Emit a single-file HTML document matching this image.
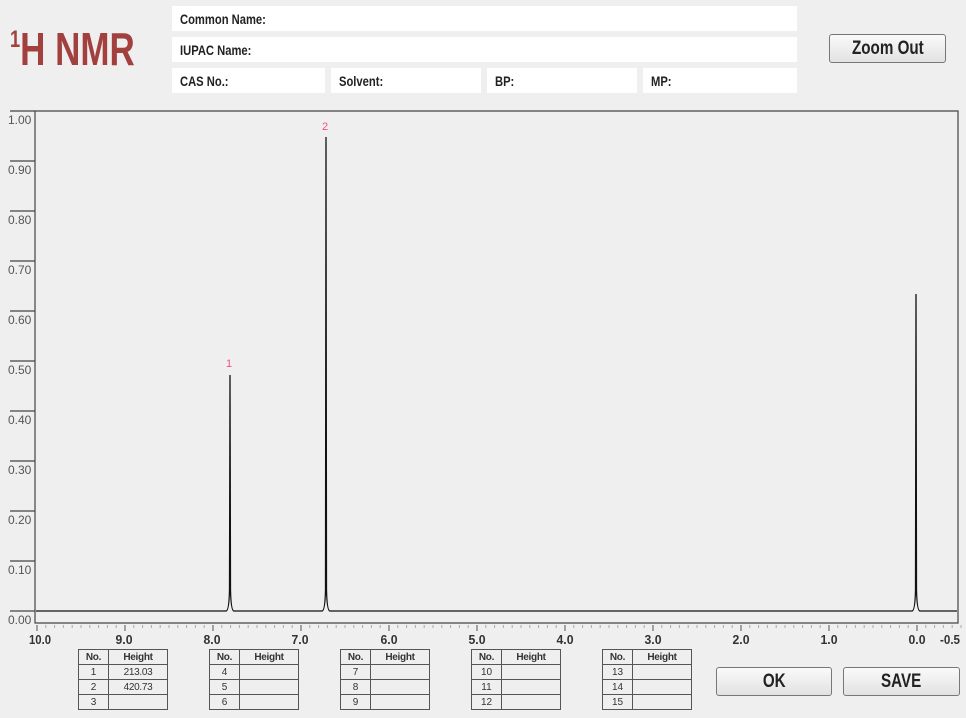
<!DOCTYPE html><html><head><style>
body{margin:0;width:966px;height:718px;background:#efefef;font-family:"Liberation Sans",sans-serif;overflow:hidden;position:relative}
.f{position:absolute;background:#fff;height:25px;font-weight:bold;font-size:14px;line-height:26px;padding-left:8px;box-sizing:border-box;color:#222}
.f span{display:inline-block;transform:scaleX(0.8);transform-origin:left}
.btn{position:absolute;border:1px solid #777;border-radius:3px;background:linear-gradient(#fafafa,#e2e2e2);font-weight:bold;text-align:center;color:#222;box-sizing:border-box}
.btn span{display:inline-block;transform:scaleX(0.8)}
table{position:absolute;border-collapse:collapse;font-size:10px;color:#333}
td{border:1px solid #555;height:14px;padding:0;line-height:13px}
td.n{width:29px;text-align:center}td.h{width:58px;text-align:center}
td b,td.h{letter-spacing:-0.3px}
</style></head><body>
<div style="position:absolute;left:10px;top:22px;color:#a2403f;font-weight:bold;font-size:46px;transform:scaleX(0.76);transform-origin:left;white-space:nowrap"><span style="font-size:24px;position:relative;top:-18px">1</span>H NMR</div>
<div class="f" style="left:172px;top:6px;width:625px"><span>Common Name:</span></div>
<div class="f" style="left:172px;top:37px;width:625px"><span>IUPAC Name:</span></div>
<div class="f" style="left:172px;top:68px;width:153px"><span>CAS No.:</span></div>
<div class="f" style="left:331px;top:68px;width:150px"><span>Solvent:</span></div>
<div class="f" style="left:487px;top:68px;width:150px"><span>BP:</span></div>
<div class="f" style="left:643px;top:68px;width:154px"><span>MP:</span></div>
<div class="btn" style="left:829px;top:34px;width:117px;height:29px;font-size:19px;line-height:27px"><span>Zoom Out</span></div>
<svg width="966" height="718" style="position:absolute;left:0;top:0">
<g stroke="#444" stroke-width="1.2" fill="none">
<path d="M35 111H958V623H35Z"/>
<path d="M10 111H35M10 161H35M10 211H35M10 261H35M10 311H35M10 361H35M10 411H35M10 461H35M10 511H35M10 561H35M10 611H35"/>
</g>
<g font-family="Liberation Sans,sans-serif" font-size="12" fill="#555">
<text x="8" y="124">1.00</text><text x="8" y="174">0.90</text><text x="8" y="224">0.80</text><text x="8" y="274">0.70</text><text x="8" y="324">0.60</text><text x="8" y="374">0.50</text><text x="8" y="424">0.40</text><text x="8" y="474">0.30</text><text x="8" y="524">0.20</text><text x="8" y="574">0.10</text><text x="8" y="624">0.00</text>
</g>
<g id="tk"></g>
<path d="M36 611H226Q229 611 229.5 590L230 375L230.5 590Q231 611 234 611H322Q325 611 325.5 590L326 137L326.5 590Q327 611 330 611H912Q915 611 915.5 590L916 294L916.5 590Q917 611 920 611H957" stroke="#111" stroke-width="1.3" fill="none"/>
<text x="226" y="367" font-size="11" fill="#f0508a" font-family="Liberation Sans,sans-serif">1</text>
<text x="322" y="130" font-size="11" fill="#f0508a" font-family="Liberation Sans,sans-serif">2</text>
<g font-size="13" font-weight="bold" fill="#333" font-family="Liberation Sans,sans-serif" text-anchor="middle">
<text x="40" y="644" textLength="22" lengthAdjust="spacingAndGlyphs">10.0</text><text x="124" y="644" textLength="17" lengthAdjust="spacingAndGlyphs">9.0</text><text x="212" y="644" textLength="17" lengthAdjust="spacingAndGlyphs">8.0</text><text x="300" y="644" textLength="17" lengthAdjust="spacingAndGlyphs">7.0</text><text x="389" y="644" textLength="17" lengthAdjust="spacingAndGlyphs">6.0</text><text x="477" y="644" textLength="17" lengthAdjust="spacingAndGlyphs">5.0</text><text x="565" y="644" textLength="17" lengthAdjust="spacingAndGlyphs">4.0</text><text x="653" y="644" textLength="17" lengthAdjust="spacingAndGlyphs">3.0</text><text x="741" y="644" textLength="17" lengthAdjust="spacingAndGlyphs">2.0</text><text x="829" y="644" textLength="17" lengthAdjust="spacingAndGlyphs">1.0</text><text x="917" y="644" textLength="17" lengthAdjust="spacingAndGlyphs">0.0</text><text x="950" y="644" textLength="20" lengthAdjust="spacingAndGlyphs">-0.5</text>
</g>
</svg>
<script>
var g=document.getElementById('tk'),s='';
for(var i=0;i<=105;i++){var x=37+i*8.8;var maj=i%10==0;s+='<line x1="'+x+'" y1="625" x2="'+x+'" y2="'+(maj?631:628)+'" stroke="'+(maj?'#555':'#aaa')+'"/>';}
g.innerHTML=s;
</script>
<table style="left:78px;top:649px"><tr><td class="n"><b>No.</b></td><td class="h"><b>Height</b></td></tr><tr><td class="n">1</td><td class="h">213.03</td></tr><tr><td class="n">2</td><td class="h">420.73</td></tr><tr><td class="n">3</td><td></td></tr></table>
<table style="left:209px;top:649px"><tr><td class="n"><b>No.</b></td><td class="h"><b>Height</b></td></tr><tr><td class="n">4</td><td></td></tr><tr><td class="n">5</td><td></td></tr><tr><td class="n">6</td><td></td></tr></table>
<table style="left:340px;top:649px"><tr><td class="n"><b>No.</b></td><td class="h"><b>Height</b></td></tr><tr><td class="n">7</td><td></td></tr><tr><td class="n">8</td><td></td></tr><tr><td class="n">9</td><td></td></tr></table>
<table style="left:471px;top:649px"><tr><td class="n"><b>No.</b></td><td class="h"><b>Height</b></td></tr><tr><td class="n">10</td><td></td></tr><tr><td class="n">11</td><td></td></tr><tr><td class="n">12</td><td></td></tr></table>
<table style="left:602px;top:649px"><tr><td class="n"><b>No.</b></td><td class="h"><b>Height</b></td></tr><tr><td class="n">13</td><td></td></tr><tr><td class="n">14</td><td></td></tr><tr><td class="n">15</td><td></td></tr></table>
<div class="btn" style="left:716px;top:667px;width:116px;height:29px;font-size:19px;line-height:27px"><span>OK</span></div>
<div class="btn" style="left:843px;top:667px;width:117px;height:29px;font-size:19px;line-height:27px"><span>SAVE</span></div>
</body></html>
